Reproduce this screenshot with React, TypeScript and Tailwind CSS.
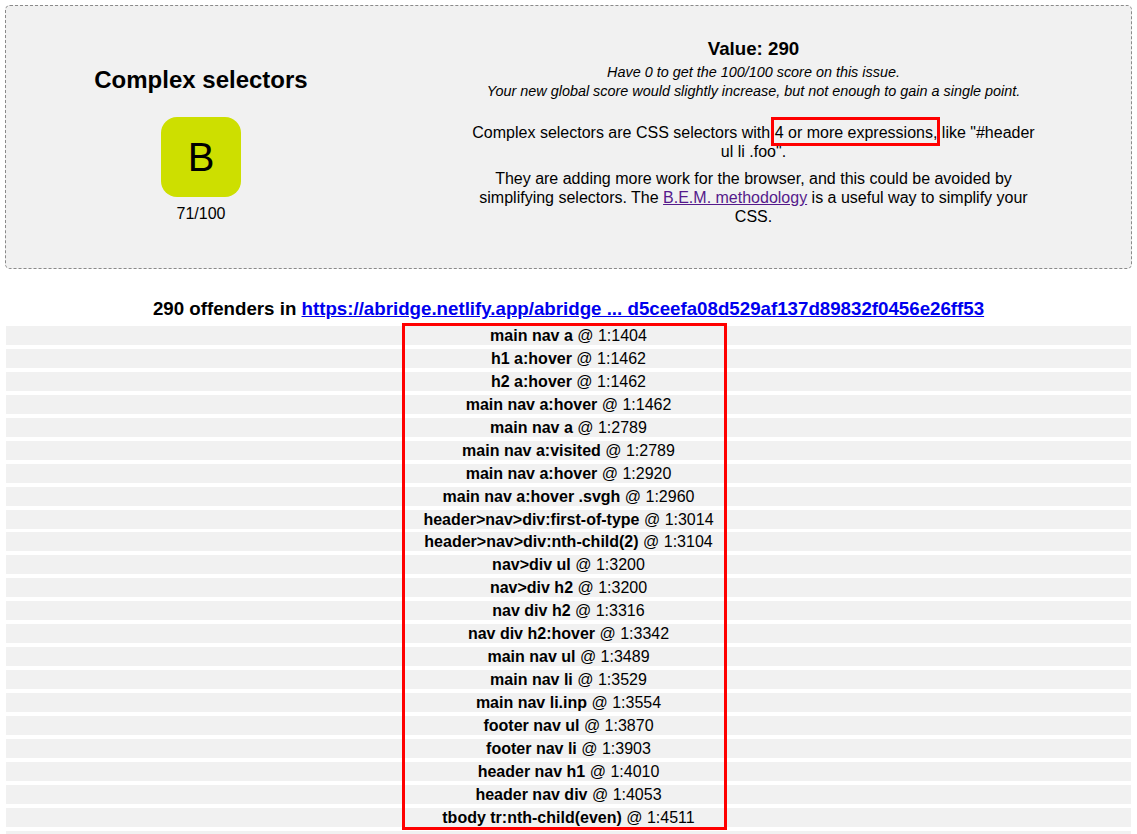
const offenders = [
  ["main nav a", "1:1404"],
  ["h1 a:hover", "1:1462"],
  ["h2 a:hover", "1:1462"],
  ["main nav a:hover", "1:1462"],
  ["main nav a", "1:2789"],
  ["main nav a:visited", "1:2789"],
  ["main nav a:hover", "1:2920"],
  ["main nav a:hover .svgh", "1:2960"],
  ["header>nav>div:first-of-type", "1:3014"],
  ["header>nav>div:nth-child(2)", "1:3104"],
  ["nav>div ul", "1:3200"],
  ["nav>div h2", "1:3200"],
  ["nav div h2", "1:3316"],
  ["nav div h2:hover", "1:3342"],
  ["main nav ul", "1:3489"],
  ["main nav li", "1:3529"],
  ["main nav li.inp", "1:3554"],
  ["footer nav ul", "1:3870"],
  ["footer nav li", "1:3903"],
  ["header nav h1", "1:4010"],
  ["header nav div", "1:4053"],
  ["tbody tr:nth-child(even)", "1:4511"],
];

export default function App() {
  return (
    <div className="h-screen bg-white text-black font-['Liberation_Sans',Arial,sans-serif] px-[5px] pt-[5px] overflow-hidden">
      {/* Issue summary */}
      <div className="flex border border-dashed border-[#8a8a8a] rounded-[5px] bg-[#f1f1f1] h-[264px]">
        <div className="w-[390px] flex flex-col items-center pt-[60px]">
          <h2 className="text-[24px] leading-[28px] font-bold">Complex selectors</h2>
          <div className="mt-[23px] w-[80px] h-[80px] rounded-[16px] bg-[#cddf00] flex items-center justify-center text-[40px] leading-none">
            B
          </div>
          <div className="mt-[8px] text-[16px] leading-[18px]">71/100</div>
        </div>
        <div className="flex-1 flex flex-col items-center pt-[32px] pr-[20px]">
          <div className="text-[18.72px] leading-[22px] font-bold">Value: 290</div>
          <div className="mt-[3px] text-[14.4px] leading-[19px] italic text-center">
            Have 0 to get the 100/100 score on this issue.
            <br />
            Your new global score would slightly increase, but not enough to gain a single point.
          </div>
          <div className="w-[570px] text-center text-[16px] leading-[19px] mt-[22px]">
            <p>
              Complex selectors are CSS selectors with{" "}
              <span className="relative">
                4 or more expressions,
                <span className="absolute -left-[4px] -right-[3px] -top-[7px] -bottom-[5px] border-[3px] border-[#ff0000]" />
              </span>{" "}
              like "#header ul li .foo".
            </p>
            <p className="mt-[8px]">
              They are adding more work for the browser, and this could be avoided by simplifying selectors. The{" "}
              <a href="#" className="text-[#551a8b] underline">
                B.E.M. methodology
              </a>{" "}
              is a useful way to simplify your CSS.
            </p>
          </div>
        </div>
      </div>

      {/* Offenders */}
      <h3 className="mt-[29px] text-center text-[18.72px] leading-[22px] font-bold">
        290 offenders in{" "}
        <a href="#" className="text-[#0000ee] underline">
          https://abridge.netlify.app/abridge ... d5ceefa08d529af137d89832f0456e26ff53
        </a>
      </h3>
      <div className="relative mt-[6px] px-[1px]">
        {offenders.map(([sel, pos], i) => (
          <div key={i} className="h-[19px] mb-[3.95px] bg-[#f1f1f1] text-center text-[16px] leading-[19px]">
            <b>{sel}</b> @ {pos}
          </div>
        ))}
        <div className="h-[19px] bg-[#f1f1f1]" />
        <div className="absolute left-[397px] w-[325px] top-[-3px] h-[507px] border-[3px] border-[#ff0000]" />
      </div>
    </div>
  );
}
